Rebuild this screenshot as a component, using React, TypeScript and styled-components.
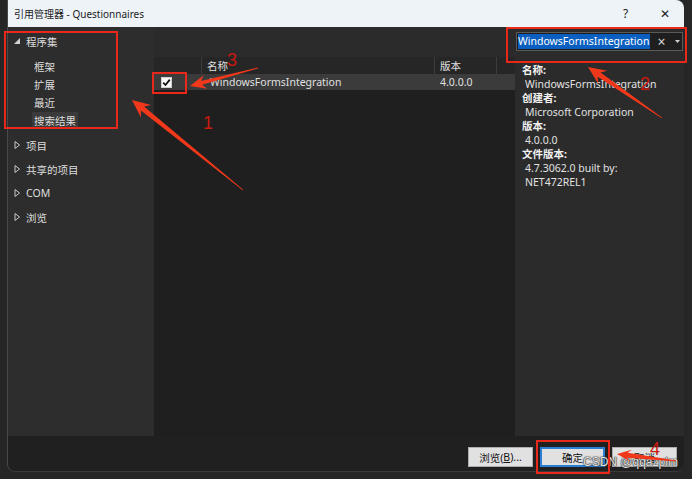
import React from 'react';
import styled, { createGlobalStyle } from 'styled-components';

const GlobalStyle = createGlobalStyle`
    html, body { margin:0; padding:0; background:#262626; }
    * { box-sizing:border-box; }
`;

const FONT = `"Noto Sans", "Noto Sans CJK SC", sans-serif`;

//Page shell
const Desktop = styled.div`
    position:relative;
    width:692px;
    height:479px;
    overflow:hidden;
    padding-left:7px;
    background:#262626;
    font-family:${FONT};
    font-size:10.5px;
`;

const Window = styled.div`
    width:677px;
    height:472px;
    display:flex;
    flex-direction:column;
    background:#2b2b2b;
    border-left:1px solid #4a4a4a;
    border-bottom:1px solid #3a3a3a;
    border-radius:0 8px 8px 8px;
    overflow:hidden;
`;

const TitleBar = styled.div`
    height:27px;
    flex:none;
    display:flex;
    align-items:center;
    padding-left:6px;
    background:#eef3f8;
    color:#1b1b1b;
    font-size:10px;
`;

const TitleButton = styled.div<{ $first?: boolean }>`
    width:39px;
    height:27px;
    display:flex;
    align-items:center;
    justify-content:center;
    color:#1b1b1b;
    font-size:12px;
    margin-left:${p => p.$first ? 'auto' : '0'};
`;

const Body = styled.div`
    flex:1;
    display:flex;
    min-height:0;
`;

//Left tree
const Tree = styled.div`
    width:146px;
    flex:none;
    background:#2d2d2d;
    padding-top:5px;
    color:#dedede;
`;

const TreeNode = styled.div<{ $h: number; $mt?: number }>`
    height:${p => p.$h}px;
    margin-top:${p => p.$mt ?? 0}px;
    display:flex;
    align-items:center;
    padding-left:5px;
    gap:5px;
`;

const Leaf = styled.div<{ $mt?: number }>`
    height:18px;
    margin-top:${p => p.$mt ?? 0}px;
    display:flex;
    align-items:center;
    padding-left:24px;
`;

const LeafText = styled.span<{ $active?: boolean }>`
    padding:1px 2px;
    background:${p => p.$active ? '#3a3a3a' : 'transparent'};
`;

const Glyph = styled.svg`
    width:8px;
    height:8px;
    flex:none;
`;

//Center list
const Center = styled.div`
    width:361px;
    flex:none;
    display:flex;
    flex-direction:column;
    padding-top:30px;
`;

const List = styled.div`
    flex:1;
    background:#1f1f1f;
    color:#e0e0e0;
`;

const Row = styled.div<{ $head?: boolean }>`
    height:${p => p.$head ? 17 : 16}px;
    display:grid;
    grid-template-columns:48px 233px 62px 1fr;
    align-items:center;
    background:${p => p.$head ? '#262626' : '#3b3b3b'};
`;

const Cell = styled.div<{ $pad: number; $line?: boolean }>`
    height:100%;
    display:flex;
    align-items:center;
    padding-left:${p => p.$pad}px;
    border-right:${p => p.$line ? '1px solid #3c3c3c' : 'none'};
    white-space:nowrap;
`;

const CheckBox = styled.div`
    width:11px;
    height:11px;
    background:#fafafa;
    border:1px solid #cfcfcf;
    display:flex;
    align-items:center;
    justify-content:center;
`;

//Right details
const Details = styled.div`
    flex:1;
    display:flex;
    flex-direction:column;
    background:#2b2b2b;
`;

const Search = styled.div`
    margin:5px 1px 0 1px;
    height:19px;
    display:flex;
    align-items:center;
    background:#1e1e1e;
    border:1px solid #5a5a5a;
    padding-left:1px;
    color:#fff;
`;

const Selected = styled.span`
    background:#0a5fc0;
    line-height:15px;
    padding-right:1px;
    white-space:nowrap;
`;

const SearchIcon = styled.span<{ $w: number }>`
    width:${p => p.$w}px;
    flex:none;
    display:flex;
    align-items:center;
    justify-content:center;
    font-size:14px;
    color:#d8d8d8;
`;

const Info = styled.div`
    margin-top:12px;
    padding-left:7px;
    display:flex;
    flex-direction:column;
    color:#e2e2e2;
    line-height:14px;
`;

const InfoLabel = styled.div`
    font-weight:700;
    color:#f2f2f2;
`;

const InfoValue = styled.div`
    padding-left:3px;
`;

//Footer
const Footer = styled.div`
    height:35px;
    flex:none;
    background:#202020;
    display:flex;
    justify-content:flex-end;
    align-items:flex-start;
    padding:11px 7px 0 0;
    gap:7px;
`;

const DlgButton = styled.div<{ $primary?: boolean }>`
    width:65px;
    height:20px;
    display:flex;
    align-items:center;
    justify-content:center;
    background:#e1e1e1;
    border:${p => p.$primary ? '2px solid #2a7fd4' : '1px solid #adadad'};
    color:#111;
`;

//Annotations on top
const Overlay = styled.svg`
    position:absolute;
    left:0;
    top:0;
    pointer-events:none;
`;

const Watermark = styled.div`
    position:absolute;
    left:583px;
    top:455px;
    font-family:"Liberation Sans", sans-serif;
    font-size:12px;
    color:#e4e4e4;
    text-shadow:0 0 1px #222, 0 0 1px #222, 0 0 2px #444;
    pointer-events:none;
`;

type Pt = [number, number];

const arrowPoints = (tail: Pt, tip: Pt, len: number, half: number, shaft: number) => {
    const dx = tip[0] - tail[0], dy = tip[1] - tail[1];
    const d = Math.hypot(dx, dy);
    const ux = dx / d, uy = dy / d;
    const px = -uy, py = ux;
    const bx = tip[0] - ux * len, by = tip[1] - uy * len;
    const nx = tip[0] - ux * len * 0.75, ny = tip[1] - uy * len * 0.75;
    const pts: Pt[] = [
        [tail[0] + px * 0.4, tail[1] + py * 0.4],
        [nx + px * shaft / 2, ny + py * shaft / 2],
        [bx + px * half, by + py * half],
        tip,
        [bx - px * half, by - py * half],
        [nx - px * shaft / 2, ny - py * shaft / 2],
        [tail[0] - px * 0.4, tail[1] - py * 0.4],
    ];
    return pts.map(p => p.join(',')).join(' ');
};

const arrows: { tail: Pt; tip: Pt; len: number; half: number; shaft: number }[] = [
    { tail: [243, 190], tip: [132, 100], len: 18, half: 8, shaft: 5 },
    { tail: [258, 68], tip: [190, 86], len: 16, half: 7, shaft: 4 },
    { tail: [662, 118], tip: [588, 67], len: 18, half: 8, shaft: 5 },
    { tail: [676, 461], tip: [617, 454], len: 14, half: 6, shaft: 5 },
];

const marks = [
    { x: 5, y: 32, w: 112, h: 96 },
    { x: 153, y: 73, w: 33, h: 20 },
    { x: 507, y: 28, w: 179, h: 34 },
    { x: 537, y: 441, w: 72, h: 32 },
];

const numbers = [
    { t: '1', x: 203, y: 129 },
    { t: '2', x: 640, y: 90 },
    { t: '3', x: 227, y: 66 },
    { t: '4', x: 650, y: 455 },
];

const ExpandedGlyph = () => (
    <Glyph viewBox="0 0 8 8"><polygon points="7,1 7,7 1,7" fill="#d0d0d0" /></Glyph>
);

const CollapsedGlyph = () => (
    <Glyph viewBox="0 0 8 8"><polygon points="2,0.5 6.5,4 2,7.5" fill="none" stroke="#c8c8c8" strokeWidth="1" /></Glyph>
);

const leaves = ['框架', '扩展', '最近', '搜索结果'];
const groups = ['项目', '共享的项目', 'COM', '浏览'];

const details: [string, string[]][] = [
    ['名称:', ['WindowsFormsIntegration']],
    ['创建者:', ['Microsoft Corporation']],
    ['版本:', ['4.0.0.0']],
    ['文件版本:', ['4.7.3062.0 built by:', 'NET472REL1']],
];

export default function App() {
    return (
        <Desktop>
            <GlobalStyle />
            <Window>
                <TitleBar>
                    引用管理器 - Questionnaires
                    <TitleButton $first>?</TitleButton>
                    <TitleButton>✕</TitleButton>
                </TitleBar>

                <Body>
                    <Tree>
                        <TreeNode $h={18}><ExpandedGlyph />程序集</TreeNode>
                        {leaves.map((l, i) => (
                            <Leaf key={l} $mt={i === 0 ? 7 : 0}>
                                <LeafText $active={l === '搜索结果'}>{l}</LeafText>
                            </Leaf>
                        ))}
                        {groups.map((g, i) => (
                            <TreeNode key={g} $h={24} $mt={i === 0 ? 4 : 0}><CollapsedGlyph />{g}</TreeNode>
                        ))}
                    </Tree>

                    <Center>
                        <List>
                            <Row $head>
                                <Cell $pad={0} $line />
                                <Cell $pad={5} $line>名称</Cell>
                                <Cell $pad={5} $line>版本</Cell>
                                <Cell $pad={0} />
                            </Row>
                            <Row>
                                <Cell $pad={7}>
                                    <CheckBox>
                                        <svg width="9" height="9" viewBox="0 0 9 9">
                                            <path d="M1.2 4.6 L3.5 7 L7.8 1.6" fill="none" stroke="#111" strokeWidth="1.8" />
                                        </svg>
                                    </CheckBox>
                                </Cell>
                                <Cell $pad={8}>WindowsFormsIntegration</Cell>
                                <Cell $pad={5}>4.0.0.0</Cell>
                                <Cell $pad={0} />
                            </Row>
                        </List>
                    </Center>

                    <Details>
                        <Search>
                            <Selected>WindowsFormsIntegration</Selected>
                            <SearchIcon $w={22}>×</SearchIcon>
                            <SearchIcon $w={10}>
                                <svg width="5" height="3" viewBox="0 0 5 3"><polygon points="0,0 5,0 2.5,3" fill="#d0d0d0" /></svg>
                            </SearchIcon>
                        </Search>
                        <Info>
                            {details.map(([label, values]) => (
                                <React.Fragment key={label}>
                                    <InfoLabel>{label}</InfoLabel>
                                    {values.map(v => <InfoValue key={v}>{v}</InfoValue>)}
                                </React.Fragment>
                            ))}
                        </Info>
                    </Details>
                </Body>

                <Footer>
                    <DlgButton>浏览(<u>B</u>)...</DlgButton>
                    <DlgButton $primary>确定</DlgButton>
                    <DlgButton>取消</DlgButton>
                </Footer>
            </Window>

            <Watermark>CSDN @qqazplm</Watermark>

            <Overlay width={692} height={479} viewBox="0 0 692 479">
                {marks.map((m, i) => (
                    <rect key={i} x={m.x} y={m.y} width={m.w} height={m.h} fill="none" stroke="#e8281a" strokeWidth="2" />
                ))}
                {arrows.map((a, i) => (
                    <polygon key={i} points={arrowPoints(a.tail, a.tip, a.len, a.half, a.shaft)} fill="#f2381a" />
                ))}
                {numbers.map(n => (
                    <text key={n.t} x={n.x} y={n.y} fill="#c81a10" fontSize="18" fontFamily="Liberation Sans, sans-serif">{n.t}</text>
                ))}
            </Overlay>
        </Desktop>
    );
}
